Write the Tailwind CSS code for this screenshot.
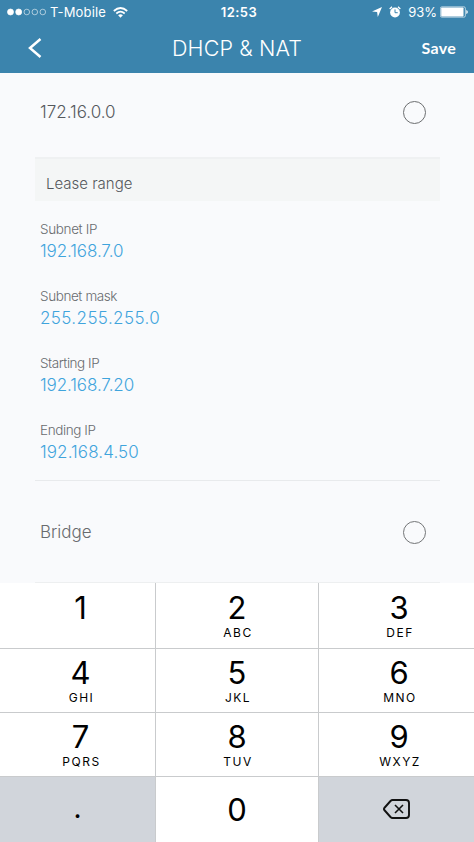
<!DOCTYPE html>
<html lang="en">
<head>
<meta charset="utf-8">
<title>DHCP &amp; NAT</title>
<script src="https://cdn.jsdelivr.net/npm/@tailwindcss/browser@4"></script>
</head>
<body class="w-[474px] h-[842px] overflow-hidden bg-[#f9fafc] font-[Inter,sans-serif] text-[#54585c] flex flex-col">
<header class="h-[73px] shrink-0 bg-[#3b84ad] text-white">
  <div class="h-6 grid grid-cols-3 items-center text-[13px] leading-6 pl-[7px] pr-[6px]">
    <div class="flex items-center whitespace-nowrap">
      <svg class="w-10 h-2" viewBox="0 0 40 8" fill="none" stroke="#fff" stroke-width=".7"><circle cx="3.5" cy="4" r="3" fill="#fff"/><circle cx="11.7" cy="4" r="3" fill="#fff"/><circle cx="19.8" cy="4" r="2.8" opacity=".8"/><circle cx="27.8" cy="4" r="2.8" opacity=".8"/><circle cx="35.8" cy="4" r="2.8" opacity=".8"/></svg>
      <span class="ml-[3px] tracking-[0.15px]">T-Mobile</span>
      <svg class="ml-[7px] w-[15px] h-[11px]" viewBox="0 0 15 11" fill="none" stroke="#fff" stroke-width="1.7"><path d="M.8 4Q7.500-2 14.200 4M3.300 6.500Q7.500 2.800 11.700 6.500"/><path d="M5.100 8.200Q7.500 6.200 9.900 8.200L7.500 10.700Z" fill="#fff" stroke="none"/></svg>
    </div>
    <div class="text-center font-semibold tracking-[0.45px] pl-[3px]">12:53</div>
    <div class="flex items-center justify-end">
      <svg class="w-[10px] h-[10px]" viewBox="0 0 10 10" fill="#fff"><path d="M10 0 5.800 10 5.100 5 0 4.400Z"/></svg>
      <svg class="ml-[7px] w-[12px] h-[12px]" viewBox="0 0 12 12"><circle cx="6" cy="6.500" r="4.900" fill="#fff"/><path d="M.7 2.900 3 .8M11.300 2.900 9 .8" stroke="#fff" stroke-width="1.400"/><path d="M6 3.400V6.700H8.700" stroke="#3b84ad" stroke-width="1" fill="none"/></svg>
      <span class="ml-[7px]">93%</span>
      <svg class="ml-[3px] w-[28px] h-[12px]" viewBox="0 0 28 12"><rect x=".4" y=".8" width="25" height="10.400" rx="1.500" fill="none" stroke="#fff" stroke-width=".6"/><rect x="1.200" y="1.600" width="22.300" height="8.800" rx=".7" fill="#fff"/><path d="M26.300 4v4q1.500-.5 1.500-2t-1.500-2" fill="#fff"/></svg>
    </div>
  </div>
  <div class="h-[48px] flex items-center pl-[28px] pr-[18px]">
    <svg class="w-[14px] h-[20px]" viewBox="0 0 14 20" fill="none" stroke="#fff" stroke-width="2.500"><path d="M12.500 1 2 10 12.500 19"/></svg>
    <h1 class="ml-[130px] text-[21.500px] leading-[48px] whitespace-nowrap font-light tracking-[0.15px]">DHCP &amp; NAT</h1>
    <span class="ml-auto text-[16px] font-bold font-[Lato,sans-serif] tracking-[0.3px]">Save</span>
  </div>
</header>
<main class="h-[510px] shrink-0 pl-[35px] pr-[34px]">
  <div class="h-[86px] border-b-2 border-[#eff1f2] flex items-center justify-between pl-[5px] pr-[14px] pb-[5px]">
    <span class="pt-px text-[17px] font-light">172.16.0.0</span>
    <i class="size-[23px] rounded-full border border-[#6c6e70]"></i>
  </div>
  <div class="h-[42px] bg-[#f4f6f6] flex items-center pl-[11px] pt-[9px] text-[15px] font-light">Lease range</div>
  <dl class="h-[280px] border-b border-[#e8eaec] pl-[5px] pt-[18px] flex flex-col gap-[23px] whitespace-nowrap">
    <div class="h-[44px]"><dt class="h-[21px] text-[13.500px] leading-[21px] text-[#686b6f] font-light tracking-[-0.35px]">Subnet IP</dt><dd class="text-[17px] leading-[23px] text-[#3fa4dc] font-light tracking-[-0.1px]">192.168.7.0</dd></div>
    <div class="h-[44px]"><dt class="h-[21px] text-[13.500px] leading-[21px] text-[#686b6f] font-light tracking-[-0.4px]">Subnet mask</dt><dd class="text-[17px] leading-[23px] text-[#3fa4dc] font-light tracking-[0.4px]">255.255.255.0</dd></div>
    <div class="h-[44px]"><dt class="h-[21px] text-[13.500px] leading-[21px] text-[#686b6f] font-light tracking-[-0.45px]">Starting IP</dt><dd class="text-[17px] leading-[23px] text-[#3fa4dc] font-light tracking-[-0.1px]">192.168.7.20</dd></div>
    <div class="h-[44px]"><dt class="h-[21px] text-[13.500px] leading-[21px] text-[#686b6f] font-light tracking-[-0.4px]">Ending IP</dt><dd class="text-[17px] leading-[23px] text-[#3fa4dc] font-light tracking-[0.1px]">192.168.4.50</dd></div>
  </dl>
  <div class="h-[102px] flex items-center justify-between pl-[5px] pr-[14px] pt-[2px] border-b border-[#edeff0]">
    <span class="text-[17px] text-[#686b6e] font-light">Bridge</span>
    <i class="size-[23px] rounded-full border border-[#737577]"></i>
  </div>
</main>
<section class="h-[259px] shrink-0 bg-[#c9cbcd] grid grid-cols-[155px_162px_155px] grid-rows-[65px_63px_63px_65px] gap-px text-black text-center">
  <div class="bg-white pt-[8px] pl-[6px]"><div class="text-[31px] leading-[33px]">1</div></div>
  <div class="bg-white pt-[8px]"><div class="text-[31px] leading-[33px]">2</div><div class="text-[12px] leading-[18px] tracking-[1.5px] pl-[2px]">ABC</div></div>
  <div class="bg-white pt-[8px] pl-[5px]"><div class="text-[31px] leading-[33px]">3</div><div class="text-[12px] leading-[18px] tracking-[1.5px] pl-[2px]">DEF</div></div>
  <div class="bg-white pt-[7px] pl-[6px]"><div class="text-[31px] leading-[33px]">4</div><div class="text-[12px] leading-[18px] tracking-[1.5px] pl-[2px]">GHI</div></div>
  <div class="bg-white pt-[7px]"><div class="text-[31px] leading-[33px]">5</div><div class="text-[12px] leading-[18px] tracking-[1.5px] pl-[2px]">JKL</div></div>
  <div class="bg-white pt-[7px] pl-[5px]"><div class="text-[31px] leading-[33px]">6</div><div class="text-[12px] leading-[18px] tracking-[1.5px] pl-[2px]">MNO</div></div>
  <div class="bg-white pt-[7px] pl-[6px]"><div class="text-[31px] leading-[33px]">7</div><div class="text-[12px] leading-[18px] tracking-[1.5px] pl-[2px]">PQRS</div></div>
  <div class="bg-white pt-[7px]"><div class="text-[31px] leading-[33px]">8</div><div class="text-[12px] leading-[18px] tracking-[1.5px] pl-[2px]">TUV</div></div>
  <div class="bg-white pt-[7px] pl-[5px]"><div class="text-[31px] leading-[33px]">9</div><div class="text-[12px] leading-[18px] tracking-[1.5px] pl-[2px]">WXYZ</div></div>
  <div class="bg-[#d1d5db] text-[28px] leading-[62px]">.</div>
  <div class="bg-white pt-[16px]"><div class="text-[31px] leading-[33px]">0</div></div>
  <div class="bg-[#d1d5db] flex items-center justify-center pb-[1px]"><svg class="w-[27px] h-[20px]" viewBox="0 0 27 20" fill="none" stroke="#111" stroke-width="1.900" stroke-linejoin="round"><path d="M9.500 1H23Q26 1 26 4V16Q26 19 23 19H9.500Q8.500 19 7.500 18L1.300 11Q.6 10 1.300 9L7.500 2Q8.500 1 9.500 1Z"/><path d="M12 6l8 8M20 6l-8 8" stroke-width="1.600"/></svg></div>
</section>
</body>
</html>
